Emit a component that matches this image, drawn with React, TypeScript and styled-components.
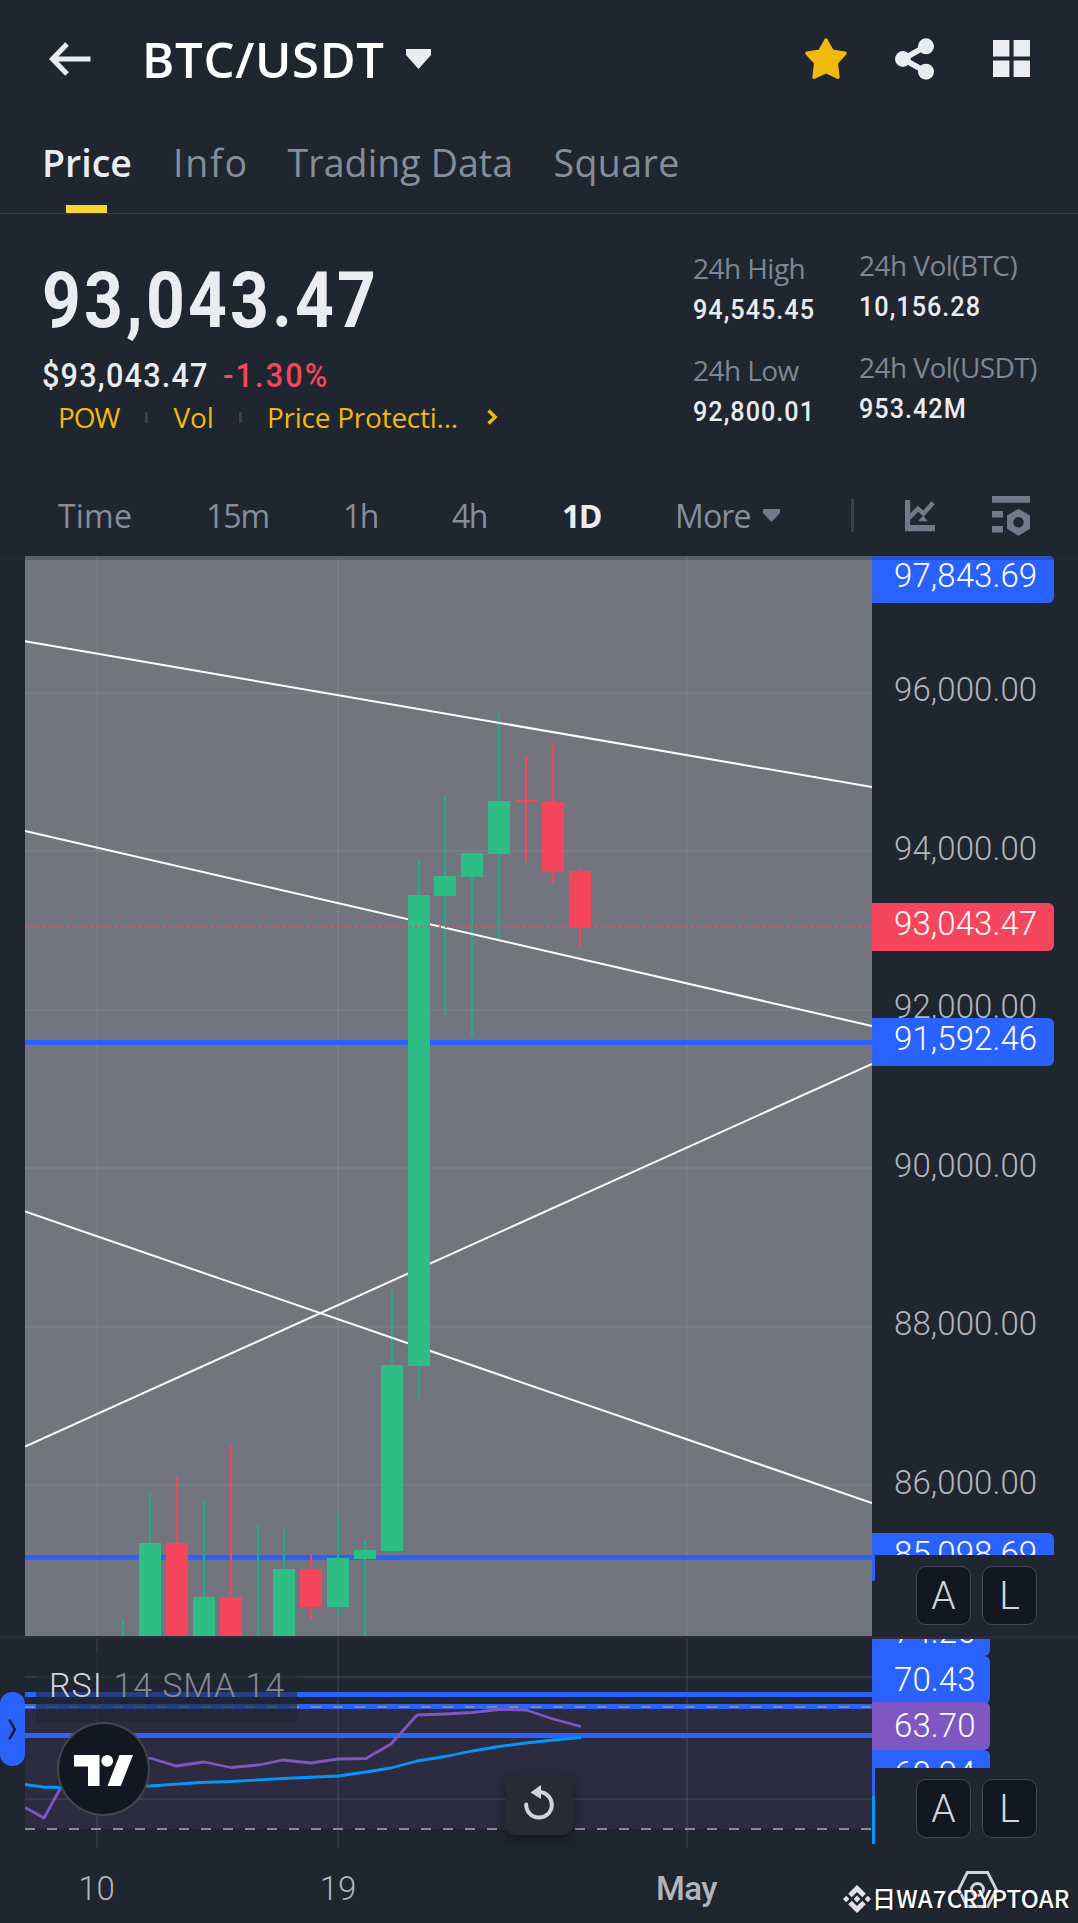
import React from 'react';
import styled, { createGlobalStyle, css } from 'styled-components';

const c = {
  page: '#202630',
  panel: '#2a2b38',
  text: '#eaecef',
  muted: '#848e9c',
  dim: '#707a8a',
  line: '#333a45',
  gold: '#f0b90b',
  yellow: '#fcd535',
  red: '#f6465d',
  green: '#2ebd85',
  wick: '#22ab94',
  blue: '#2962ff',
  purple: '#7e57c2',
  cyan: '#0496ff',
  plot: '#72757d',
  axis: '#b2b5be',
};

const UI = `"Open Sans", "Noto Sans", sans-serif`;
const NUM = `Roboto, "Liberation Sans", sans-serif`;

const Global = createGlobalStyle`
  * { box-sizing: border-box; }
  body { margin: 0; background: ${c.page}; }
`;

const Screen = styled.main`
  width: 1078px;
  height: 1923px;
  overflow: hidden;
  background: ${c.page};
  color: ${c.text};
  font-family: ${UI};
  white-space: nowrap;
`;

/* ---------- header ---------- */
const Header = styled.header`
  display: flex;
  align-items: center;
  height: 117px;
  padding: 0 48px 0 49px;
`;
const Pair = styled.h1`
  margin: 0 auto 0 51px;
  display: flex;
  align-items: center;
  gap: 21px;
  font-size: 49px;
  font-weight: 600;
  line-height: 60px;
  letter-spacing: 0.7px;
  color: #fff;
`;
const HeaderActions = styled.div`
  display: flex;
  align-items: center;
  svg + svg { margin-left: 48px; }
  svg:last-child { margin-left: 59px; }
`;

/* ---------- tabs ---------- */
const Tabs = styled.nav`
  display: grid;
  grid-template-columns: 131px 114.5px 266px auto;
  justify-content: start;
  justify-items: start;
  height: 97px;
  padding: 4px 0 0 42px;
  border-bottom: 1px solid ${c.line};
`;
const Tab = styled.div<{ $active?: boolean; $spacing?: number }>`
  display: flex;
  flex-direction: column;
  align-items: center;
  font-size: 37.5px;
  font-weight: ${p => (p.$active ? 600 : 500)};
  line-height: 84px;
  letter-spacing: ${p => p.$spacing ?? 0}px;
  color: ${p => (p.$active ? c.text : c.muted)};
  &::after {
    content: '';
    width: 41px;
    height: 8px;
    background: ${p => (p.$active ? c.yellow : 'transparent')};
  }
`;

/* ---------- summary ---------- */
const Summary = styled.section`
  display: grid;
  grid-template-columns: 651px 166px auto;
  justify-content: start;
  height: 263px;
  padding-left: 42px;
`;
const Figure = styled.span<{ $size: number; $weight: number; $color?: string; $line: number; $squeeze?: number; $track?: number }>`
  display: block;
  font-family: ${NUM};
  font-size: ${p => p.$size}px;
  font-weight: ${p => p.$weight};
  line-height: ${p => p.$line}px;
  letter-spacing: ${p => p.$track ?? 0.04}em;
  color: ${p => p.$color ?? c.text};
  transform: scaleX(${p => p.$squeeze ?? 0.9});
  transform-origin: 0 50%;
`;
const PriceColumn = styled.div`
  display: flex;
  flex-direction: column;
  gap: 4px;
  padding-top: 37px;
`;
const SubPrice = styled.div`
  display: grid;
  grid-template-columns: 181px auto;
  justify-content: start;
`;
const Tags = styled.div`
  display: flex;
  align-items: center;
  height: 36px;
  padding-left: 16px;
  font-size: 28px;
  line-height: 36px;
  color: ${c.gold};
`;
const Tag = styled.span<{ $width: number; $spacing: number }>`
  width: ${p => p.$width}px;
  letter-spacing: ${p => p.$spacing}px;
`;
const TagRule = styled.i`
  width: 3px;
  height: 11px;
  margin-right: 25.5px;
  background: #3a414c;
`;
const Stats = styled.div<{ $top: number }>`
  display: flex;
  flex-direction: column;
  gap: 22px;
  padding-top: ${p => p.$top}px;
`;
const Stat = styled.div`
  display: flex;
  flex-direction: column;
  gap: 4px;
`;
const StatLabel = styled.span`
  font-size: 28px;
  line-height: 36px;
  letter-spacing: -0.55px;
  color: #7d8694;
`;

/* ---------- time frame toolbar ---------- */
const Toolbar = styled.div`
  display: grid;
  grid-template-columns: 148px 137px 109px 110px 113px 176px 54px 87px 38px;
  align-items: center;
  height: 79px;
  padding: 0 0 2px 58px;
`;
const Frame = styled.span<{ $active?: boolean; $spacing?: number }>`
  display: flex;
  align-items: center;
  gap: 13px;
  font-size: 32px;
  line-height: 44px;
  font-weight: ${p => (p.$active ? 700 : 400)};
  letter-spacing: ${p => p.$spacing ?? 0}px;
  color: ${p => (p.$active ? c.text : c.muted)};
`;
const ToolbarRule = styled.i`
  width: 3px;
  height: 33px;
  background: #3a414c;
`;

/* ---------- chart ---------- */
const Chart = styled.section`
  position: relative;
  display: grid;
  grid-template-columns: 25px 847px 206px;
  grid-template-rows: 1292px 75px;
`;
const Plot = styled.div`
  grid-column: 2;
  svg { display: block; }
`;
const Axis = styled.div`
  display: grid;
  grid-template-rows: 1080px 209px;
  row-gap: 3px;
`;
const Scale = styled.div`
  position: relative;
  overflow: hidden;
`;
const tagged = css<{ $fill?: string }>`
  background: ${p => p.$fill};
  color: #fff;
  border-radius: 0 6px 6px 0;
`;
const ScaleLabel = styled.span<{ $y: number; $fill?: string; $narrow?: boolean }>`
  position: absolute;
  left: 0;
  top: ${p => p.$y - 24}px;
  width: ${p => (p.$narrow ? 118 : 182)}px;
  height: 48px;
  padding-left: 22px;
  font: 300 33px/${p => (p.$narrow ? 48 : 41)}px ${NUM};
  letter-spacing: 0.1px;
  color: ${c.axis};
  ${p => p.$fill && tagged}
`;
const ScaleFooter = styled.div<{ $height: number }>`
  position: absolute;
  left: 3px;
  right: 0;
  bottom: 0;
  height: ${p => p.$height}px;
  display: flex;
  gap: 11px;
  padding: 11px 0 0 41px;
  background: ${c.page};
`;
const EdgeMark = styled.i<{ $top: number; $height: number; $fill: string }>`
  position: absolute;
  left: 0;
  top: ${p => p.$top}px;
  width: 3px;
  height: ${p => p.$height}px;
  background: ${p => p.$fill};
`;
const ScaleButton = styled.button`
  width: 55px;
  height: 59px;
  padding: 0;
  border: 1.5px solid #434651;
  border-radius: 10px;
  background: #131722;
  color: #d1d4dc;
  font: 300 39px/54px ${NUM};
`;
const TopEdge = styled.i`
  position: absolute;
  inset: 0 0 auto 0;
  height: 4px;
  background: rgba(42, 46, 66, 0.3);
`;
const PaneDivider = styled.i`
  position: absolute;
  inset: 1080px 0 auto 0;
  height: 3px;
  background: ${c.panel};
`;
const Legend = styled.div`
  position: absolute;
  left: 36px;
  top: 1096px;
  width: 261px;
  height: 70px;
  padding-left: 13px;
  background: rgba(32, 38, 48, 0.6);
  color: #868993;
  font: 300 34px/66px ${NUM};
  letter-spacing: 0.95px;
`;
const LegendName = styled.span`
  margin-right: 1.5px;
  color: #d1d4dc;
`;
const DrawerHandle = styled.div`
  position: absolute;
  left: 0;
  top: 1136px;
  width: 25px;
  height: 74px;
  display: grid;
  place-items: center;
  border-radius: 12px;
  background: ${c.blue};
`;
const Brand = styled.div`
  position: absolute;
  left: 57px;
  top: 1166px;
  width: 93px;
  height: 94px;
  display: grid;
  place-items: center;
  padding-top: 3px;
  border: 2.5px solid #434651;
  border-radius: 50%;
  background: #131722;
`;
const ResetButton = styled.div`
  position: absolute;
  left: 506px;
  top: 1217px;
  width: 67px;
  height: 62px;
  display: grid;
  place-items: center;
  padding: 0 2px 2px 0;
  border-radius: 10px;
  background: #282b36;
  box-shadow: 0 6px 12px rgba(12, 15, 22, 0.55);
`;
const TimeAxis = styled.div`
  grid-column: 1 / -1;
  display: grid;
  grid-template-columns: 193px 290px 407px 67px 41px;
  align-items: start;
  padding-top: 19px;
  justify-items: center;
  color: ${c.axis};
  font: 300 33px/44px ${NUM};
  svg { margin-top: 4px; }
`;
const Month = styled.span`
  font-weight: 500;
  letter-spacing: -0.5px;
`;
const Watermark = styled.div`
  position: absolute;
  left: 843px;
  bottom: 6px;
  display: flex;
  align-items: center;
  color: #fff;
  font: 500 24px/36px "Noto Sans CJK SC", sans-serif;
  letter-spacing: 0.15px;
  text-shadow: 1px 1px 1px rgba(0, 0, 0, 0.6);
  span { position: relative; top: -1px; }
  svg { margin-right: 1px; }
`;

/* ---------- icons ---------- */
const BackIcon = () => (
  <svg width="42" height="34" viewBox="0 0 42 34" fill="none" stroke={c.text} strokeWidth="5.2">
    <path d="M41.5 17H5M18 2 3.5 17 18 32" />
  </svg>
);
const CaretIcon = ({ w, h, fill }: { w: number; h: number; fill: string }) => (
  <svg width={w} height={h} viewBox="0 0 25 20" preserveAspectRatio="none">
    <path d="M0 0h25v6L12.5 20 0 6z" fill={fill} />
  </svg>
);
const StarIcon = () => (
  <svg width="42" height="41" viewBox="0 0 42 41">
    <path
      d="M21 2 27.3 13.3 40 15.3 31.3 24.9 33 39.2 21 33.6 9 39.2 10.7 24.9 2 15.3 14.7 13.3z"
      fill={c.gold} stroke={c.gold} strokeWidth="3.4" strokeLinejoin="round"
    />
  </svg>
);
const ShareIcon = () => (
  <svg width="39" height="42" viewBox="0 0 39 42" fill={c.text}>
    <path d="M31 8.3 8 21l23 12.7" fill="none" stroke={c.text} strokeWidth="5.6" />
    <circle cx="7.9" cy="21" r="7.9" />
    <circle cx="31" cy="8.3" r="8" />
    <circle cx="31" cy="33.7" r="8" />
  </svg>
);
const GridIcon = () => (
  <svg width="37" height="37" viewBox="0 0 37 37" fill={c.text}>
    <path d="M0 0h16.4v16.4H0zM20.6 0H37v16.4H20.6zM0 20.6h16.4V37H0zM20.6 20.6H37V37H20.6z" />
  </svg>
);
const ChevronIcon = () => (
  <svg width="11" height="16" viewBox="0 0 11 16" fill="none" stroke={c.gold} strokeWidth="3.4">
    <path d="M1.5 1.5 8.2 8 1.5 14.5" />
  </svg>
);
const LineChartIcon = () => (
  <svg width="30" height="32" viewBox="0 0 30 32">
    <path d="M0 0h5.2v25H30v6.3H0z" fill={c.dim} />
    <path d="M4 18 13 8.7l5.5 5L28 2.8" fill="none" stroke={c.dim} strokeWidth="4.4" />
    <path d="M18 15.8 23 21.2H13z" fill={c.dim} />
  </svg>
);
const IndicatorIcon = () => (
  <svg width="38" height="40" viewBox="0 0 38 40" fill={c.dim}>
    <path d="M0 0h38v6.8H0zM0 15h11v6.4H0zM0 30h11v6.4H0z" />
    <path
      fillRule="evenodd"
      d="M26.5 12.8 38 19.6v13.2l-11.5 6.9L15 32.8V19.6zM26.5 21a5.2 5.2 0 1 0 0 10.4 5.2 5.2 0 0 0 0-10.4z"
    />
  </svg>
);
const BrandIcon = () => (
  <svg width="60" height="32" viewBox="0 0 60 32" fill="#fff">
    <path d="M0 0h25.5v31H14V11.5H0z" />
    <circle cx="33.2" cy="5.9" r="5.9" />
    <path d="M45.5 0H59L46.7 31H33.5z" />
  </svg>
);
const ResetIcon = () => (
  <svg width="30" height="36" viewBox="0 0 30 36">
    <path d="M2.2 19.5A12.8 12.8 0 1 0 15.5 7" fill="none" stroke="#d1d4dc" strokeWidth="4" strokeLinecap="round" />
    <path d="M17 0v14L6.5 7.5z" fill="#d1d4dc" />
  </svg>
);
const HandleIcon = () => (
  <svg width="9" height="21" viewBox="0 0 9 21" fill="none" stroke="#131722" strokeWidth="2.4" strokeLinecap="round">
    <path d="M1.8 1.5 6.8 10.5 1.8 19.5" />
  </svg>
);
const SettingsIcon = () => (
  <svg width="41" height="37" viewBox="0 0 41 37" fill="none" stroke="#d1d4dc" strokeWidth="2.8">
    <path d="M10.3 1.5h20.4L39.3 18.5 30.7 35.5H10.3L1.7 18.5z" />
    <circle cx="20.5" cy="18.5" r="6" />
  </svg>
);
const ExchangeIcon = () => (
  <svg width="28" height="28" viewBox="0 0 28 28" fill="#e2e0e6">
    <path d="M14 0 22.8 8.8 19.3 12.3 14 7 8.7 12.3 5.2 8.8zM14 28 5.2 19.2 8.7 15.7 14 21l5.3-5.3 3.5 3.5zM3.2 10.8 6.4 14l-3.2 3.2L0 14zM24.8 10.8 28 14l-3.2 3.2L21.6 14zM14 10.6l3.4 3.4-3.4 3.4-3.4-3.4z" />
  </svg>
);

/* ---------- chart data: centre x, body top, body bottom, wick top, wick bottom ---------- */
type Candle = { x: number; body?: [number, number]; wick: [number, number]; up: boolean };
const candles: Candle[] = [
  { x: 123, wick: [1620, 1636], up: true },
  { x: 150, body: [1543, 1636], wick: [1493, 1636], up: true },
  { x: 177, body: [1543, 1636], wick: [1477, 1636], up: false },
  { x: 204, body: [1597, 1636], wick: [1501, 1636], up: true },
  { x: 231, body: [1597, 1636], wick: [1446, 1636], up: false },
  { x: 258, wick: [1525, 1636], up: true },
  { x: 284, body: [1569, 1636], wick: [1527, 1636], up: true },
  { x: 311, body: [1569, 1607], wick: [1554, 1620], up: false },
  { x: 338, body: [1558, 1607], wick: [1511, 1615], up: true },
  { x: 365, body: [1550, 1559], wick: [1539, 1636], up: true },
  { x: 392, body: [1365, 1551], wick: [1290, 1553], up: true },
  { x: 419, body: [895, 1366], wick: [860, 1400], up: true },
  { x: 445, body: [876, 896], wick: [796, 1015], up: true },
  { x: 472, body: [853, 877], wick: [851, 1037], up: true },
  { x: 499, body: [801, 854], wick: [712, 942], up: true },
  { x: 526, body: [800, 802], wick: [756, 862], up: false },
  { x: 553, body: [802, 872], wick: [743, 883], up: false },
  { x: 580, body: [871, 928], wick: [867, 946], up: false },
];
const gridX = [97, 338, 687];
const gridY = [693, 851, 1010, 1168, 1327, 1485];
const trends = [
  [25, 641.3, 872, 787],
  [25, 831, 872, 1026],
  [25, 1446.5, 872, 1064],
  [25, 1211.5, 872, 1503],
];
const rsi =
  '25,1807.5 44,1818 60,1789 80,1764 97,1766 123,1768 150,1758 176,1766 204,1762 231,1767.5 259,1765 283,1760 311,1763 338,1759 366,1758.5 391,1744 417,1715 445,1714 472,1712.5 499,1709.5 526,1710 553,1719 581,1726.5';
const sma =
  '25,1784.5 43,1787 60,1787.5 97,1788 150,1786 200,1782.5 231,1781.5 283,1778.5 338,1776 366,1772 391,1768 417,1761 445,1756.5 472,1751 499,1746.5 526,1743 553,1740 581,1737.5';

const PlotDrawing = () => (
  <svg width="847" height="1292" viewBox="25 556 847 1292">
    <rect x="25" y="556" width="847" height="1080" fill={c.plot} />
    <rect x="25" y="1707" width="847" height="122" fill="#2c2b3f" />
    <g stroke="#b2b5be" strokeOpacity="0.11" strokeWidth="2">
      {gridX.map(x => <path key={x} d={`M${x} 556V1848`} />)}
      {[...gridY, 1677, 1799].map(y => <path key={y} d={`M25 ${y}H872`} />)}
    </g>
    <g stroke={c.blue} strokeWidth="5">
      <path d="M25 1042.5H872M25 1557.5H872" />
      <path d="M25 1694.5H872M25 1706.5H872M25 1735.5H872" />
    </g>
    {candles.map(k => (
      <rect key={k.x} x={k.x - 1} y={k.wick[0]} width="2" height={k.wick[1] - k.wick[0]} fill={k.up ? c.wick : c.red} />
    ))}
    <g stroke="#fff" strokeWidth="2">
      {trends.map(([x1, y1, x2, y2]) => <line key={y1} x1={x1} y1={y1} x2={x2} y2={y2} />)}
    </g>
    {candles.map(k => k.body && (
      <rect key={k.x} x={k.x - 11} y={k.body[0]} width="22" height={k.body[1] - k.body[0]} fill={k.up ? c.green : c.red} />
    ))}
    <path d="M25 927H872" stroke={c.red} strokeWidth="2" strokeDasharray="2 4" />
    <path d="M25 1707H872M25 1829H872" stroke="#868993" strokeWidth="2" strokeDasharray="10 12" />
    <g fill="none" strokeWidth="2.8" strokeLinejoin="round">
      <polyline points={rsi} stroke={c.purple} />
      <polyline points={sma} stroke={c.cyan} />
    </g>
  </svg>
);

const ScaleButtons = ({ height }: { height: number }) => (
  <ScaleFooter $height={height}>
    <ScaleButton>A</ScaleButton>
    <ScaleButton>L</ScaleButton>
  </ScaleFooter>
);

const Metric = ({ label, value }: { label: string; value: string }) => (
  <Stat>
    <StatLabel>{label}</StatLabel>
    <Figure $size={28} $weight={500} $line={40}>{value}</Figure>
  </Stat>
);

export default function App() {
  return (
    <Screen>
      <Global />
      <Header>
        <BackIcon />
        <Pair>BTC/USDT<CaretIcon w={25} h={20} fill={c.text} /></Pair>
        <HeaderActions>
          <StarIcon />
          <ShareIcon />
          <GridIcon />
        </HeaderActions>
      </Header>
      <Tabs>
        <Tab $active>Price</Tab>
        <Tab $spacing={1.8}>Info</Tab>
        <Tab $spacing={0.1}>Trading Data</Tab>
        <Tab $spacing={0.4}>Square</Tab>
      </Tabs>
      <Summary>
        <PriceColumn>
          <Figure $size={77} $weight={700} $line={100} $squeeze={0.88} $track={0.047}>93,043.47</Figure>
          <SubPrice>
            <Figure $size={34} $weight={500} $line={40}>$93,043.47</Figure>
            <Figure $size={34} $weight={500} $line={40} $color={c.red} $track={0.07}>-1.30%</Figure>
          </SubPrice>
          <Tags>
            <Tag $width={87} $spacing={-1}>POW</Tag>
            <TagRule />
            <Tag $width={65} $spacing={-0.2}>Vol</Tag>
            <TagRule />
            <Tag $width={220} $spacing={-0.25}>Price Protecti...</Tag>
            <ChevronIcon />
          </Tags>
        </PriceColumn>
        <Stats $top={36}>
          <Metric label="24h High" value="94,545.45" />
          <Metric label="24h Low" value="92,800.01" />
        </Stats>
        <Stats $top={33}>
          <Metric label="24h Vol(BTC)" value="10,156.28" />
          <Metric label="24h Vol(USDT)" value="953.42M" />
        </Stats>
      </Summary>
      <Toolbar>
        <Frame $spacing={0.2}>Time</Frame>
        <Frame $spacing={-1}>15m</Frame>
        <Frame $spacing={-1.6}>1h</Frame>
        <Frame $spacing={-1.6}>4h</Frame>
        <Frame $active $spacing={-1.6}>1D</Frame>
        <Frame $spacing={-0.9}>More<CaretIcon w={17} h={13} fill={c.dim} /></Frame>
        <ToolbarRule />
        <LineChartIcon />
        <IndicatorIcon />
      </Toolbar>
      <Chart>
        <Plot><PlotDrawing /></Plot>
        <Axis>
          <Scale>
            <ScaleLabel $y={137}>96,000.00</ScaleLabel>
            <ScaleLabel $y={295.5}>94,000.00</ScaleLabel>
            <ScaleLabel $y={454}>92,000.00</ScaleLabel>
            <ScaleLabel $y={612.5}>90,000.00</ScaleLabel>
            <ScaleLabel $y={771}>88,000.00</ScaleLabel>
            <ScaleLabel $y={929.5}>86,000.00</ScaleLabel>
            <ScaleLabel $y={23} $fill={c.blue}>97,843.69</ScaleLabel>
            <ScaleLabel $y={371} $fill={c.red}>93,043.47</ScaleLabel>
            <ScaleLabel $y={486} $fill={c.blue}>91,592.46</ScaleLabel>
            <ScaleLabel $y={1001} $fill={c.blue}>85,098.69</ScaleLabel>
            <EdgeMark $top={990} $height={35} $fill={c.blue} />
            <ScaleButtons height={81} />
          </Scale>
          <Scale>
            <ScaleLabel $y={-7} $fill={c.blue} $narrow>74.26</ScaleLabel>
            <ScaleLabel $y={41} $fill={c.blue} $narrow>70.43</ScaleLabel>
            <ScaleLabel $y={135} $fill={c.blue} $narrow>60.94</ScaleLabel>
            <ScaleLabel $y={87} $fill={c.purple} $narrow>63.70</ScaleLabel>
            <EdgeMark $top={129} $height={28} $fill={c.blue} />
            <EdgeMark $top={157} $height={48} $fill={c.cyan} />
            <ScaleButtons height={80} />
          </Scale>
        </Axis>
        <TimeAxis>
          <span>10</span>
          <span>19</span>
          <Month>May</Month>
          <i />
          <SettingsIcon />
        </TimeAxis>
        <TopEdge />
        <PaneDivider />
        <Legend><LegendName>RSI</LegendName> 14 SMA 14</Legend>
        <DrawerHandle><HandleIcon /></DrawerHandle>
        <Brand><BrandIcon /></Brand>
        <ResetButton><ResetIcon /></ResetButton>
        <Watermark><ExchangeIcon /><span>日WA7CRYPTOAR</span></Watermark>
      </Chart>
    </Screen>
  );
}
